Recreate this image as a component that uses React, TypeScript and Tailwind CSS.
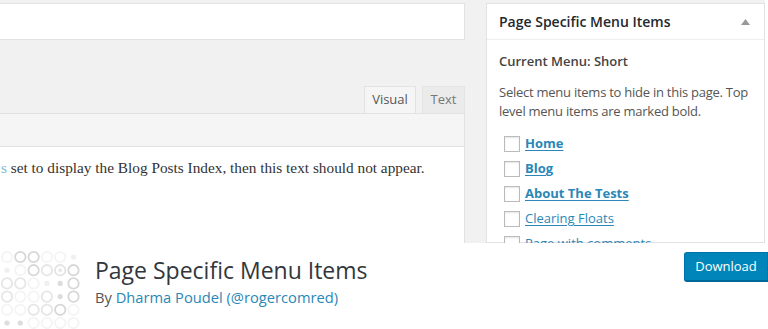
import React from "react";

const ui = { fontFamily: '"Open Sans", "Noto Sans", Arial, sans-serif' };
const serif = { fontFamily: '"Liberation Serif", "DejaVu Serif", serif' };

// 0 none, 1 faint ring, 2 medium ring, 3 dark ring, 4 faint dot, 5 medium dot, 6 ring+dot
const pattern = [
  [1, 3, 3, 1, 1, 4],
  [4, 1, 3, 2, 6, 3],
  [2, 2, 1, 4, 5, 3],
  [2, 1, 1, 2, 5, 3],
  [1, 1, 2, 2, 3, 1],
  [5, 5, 1, 1, 1, 1],
];

function PluginIcon() {
  const colors = ["", "#f4f4f4", "#e6e6e6", "#d7d7d7", "#f0f0f0", "#dddddd", "#e4e4e4"];
  return (
    <svg width="84" height="86" viewBox="0 0 84 86" className="shrink-0">
      {pattern.map((row, r) =>
        row.map((v, c) => {
          if (!v) return null;
          const cx = 7 + c * 13.3;
          const cy = 14 + r * 13.2;
          if (v === 4 || v === 5)
            return <circle key={`${r}-${c}`} cx={cx} cy={cy} r="2.6" fill={colors[v]} />;
          return (
            <g key={`${r}-${c}`}>
              <circle cx={cx} cy={cy} r="5.2" fill="none" stroke={colors[v]} strokeWidth="1.8" />
              {v === 6 && <circle cx={cx} cy={cy} r="2" fill="#e8e8e8" />}
            </g>
          );
        })
      )}
    </svg>
  );
}

const menuItems = [
  { label: "Home", bold: true },
  { label: "Blog", bold: true },
  { label: "About The Tests", bold: true },
  { label: "Clearing Floats", bold: false },
  { label: "Page with comments", bold: false },
];

export default function App() {
  return (
    <div className="w-[768px] h-[329px] overflow-hidden bg-white" style={ui}>
      {/* banner screenshot */}
      <div className="h-[243px] w-[765px] bg-[#f1f1f1] flex overflow-hidden">
        <div className="w-[465px] flex flex-col pt-[3px]">
          <div className="h-[37px] bg-white border border-l-0 border-[#e2e2e2]" />
          <div className="flex justify-end items-end h-[73px] gap-[6px]">
            <div className="w-[52px] h-[27px] bg-[#f5f5f5] border border-b-0 border-[#e2e2e2] text-[13px] text-[#555] flex items-center justify-center">
              Visual
            </div>
            <div className="w-[43px] h-[27px] bg-[#ebebeb] border border-b-0 border-[#e4e4e4] text-[13px] text-[#777] flex items-center justify-center">
              Text
            </div>
          </div>
          <div className="h-[34px] bg-[#f5f5f5] border-y border-r border-[#e2e2e2]" />
          <div className="flex-1 bg-white border-r border-[#e2e2e2] pt-[10px] pl-[1px]">
            <p className="text-[15.3px] text-[#333] whitespace-nowrap" style={serif}>
              <span className="text-[#7fb8d6]">s</span> set to display the Blog Posts Index, then this text should not appear.
            </p>
          </div>
        </div>

        <div className="ml-[21px] mt-[3px] w-[279px] shrink-0 bg-white border border-[#e2e2e2] flex flex-col">
          <div className="h-[36px] shrink-0 border-b border-[#eee] flex items-center justify-between pl-[12px] pr-[14px]">
            <span className="text-[14px] font-semibold text-[#23282d]">Page Specific Menu Items</span>
            <svg width="9" height="6" viewBox="0 0 9 6">
              <path d="M4.5 0 L9 6 L0 6 Z" fill="#999" />
            </svg>
          </div>
          <div className="shrink-0 pl-[12px] pr-[6px] pt-[12px] text-[13px]">
            <p className="font-semibold text-[#444] leading-[19px]">Current Menu: Short</p>
            <p className="mt-[12px] leading-[19px] text-[#555] tracking-[-0.25px]">
              Select menu items to hide in this page. Top level menu items are marked bold.
            </p>
            <ul className="mt-[14px] flex flex-col gap-[7px] pl-[5px]">
              {menuItems.map((m) => (
                <li key={m.label} className="flex items-center gap-[5px] h-[18px]">
                  <span className="w-[16px] h-[16px] border border-[#bbb] bg-white shadow-[inset_0_1px_2px_rgba(0,0,0,0.1)]" />
                  <span
                    className={`text-[13px] text-[#2a87b7] underline underline-offset-2 ${m.bold ? "font-bold" : ""}`}
                  >
                    {m.label}
                  </span>
                </li>
              ))}
            </ul>
          </div>
        </div>
      </div>

      {/* plugin header */}
      <div className="flex items-start">
        <PluginIcon />
        <div className="ml-[11px] pt-[11px] flex-1">
          <h1 className="text-[23px] leading-[32px] text-[#32373c] font-normal">Page Specific Menu Items</h1>
          <p className="text-[14.7px] leading-[20px] text-[#555] mt-[1px]">
            By <span className="text-[#2a87b7]">Dharma Poudel (@rogercomred)</span>
          </p>
        </div>
        <button className="mt-[9px] w-[84px] h-[29px] bg-[#0085ba] border border-[#0073aa] border-b-[#006799] rounded-l-[3px] text-white text-[13px] shadow-[0_1px_0_#006799] flex items-center justify-center">
          Download
        </button>
      </div>
    </div>
  );
}
